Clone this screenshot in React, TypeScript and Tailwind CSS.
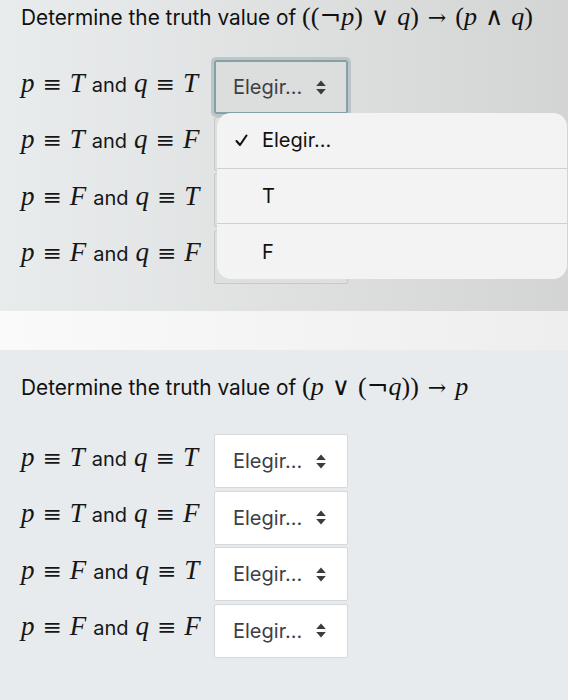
// Truth table quiz: two questions, the first with its native select menu open

const sans = "font-['Inter','Liberation_Sans',sans-serif]";
const serif = "font-['Liberation_Serif','DejaVu_Serif',serif] italic";
const op = "font-['DejaVu_Serif',serif] font-light";

type Row = { p: "T" | "F"; q: "T" | "F" };

const rows: Row[] = [
  { p: "T", q: "T" },
  { p: "T", q: "F" },
  { p: "F", q: "T" },
  { p: "F", q: "F" },
];

function SortIcon() {
  return (
    <svg width="10" height="15" viewBox="0 0 10 15" fill="#3a3d40">
      <polygon points="5 0.5 9.8 6 0.2 6" />
      <polygon points="0.2 9 9.8 9 5 14.5" />
    </svg>
  );
}

function CheckMark() {
  return (
    <svg width="13" height="13" viewBox="0 0 13 13" fill="none" stroke="#111" strokeWidth="2.1" strokeLinecap="round" strokeLinejoin="round">
      <polyline points="1.5 7 5 11 11.5 1.5" />
    </svg>
  );
}

function Label({ row }: { row: Row }) {
  return (
    <div className="w-[214px] shrink-0 pl-[21px] pb-[8px] text-[#161616] whitespace-nowrap flex items-baseline">
      <span className={`${serif} text-[27px]`}>p</span>
      <span className={`${op} text-[23px] mx-[8px]`}>≡</span>
      <span className={`${serif} text-[27px]`}>{row.p}</span>
      <span className={`${sans} text-[20px] mx-[7px]`}>and</span>
      <span className={`${serif} text-[27px]`}>q</span>
      <span className={`${op} text-[23px] mx-[8px]`}>≡</span>
      <span className={`${serif} text-[27px]`}>{row.q}</span>
    </div>
  );
}

function SelectBox({ variant }: { variant: "focus" | "dim" | "normal" }) {
  const box =
    variant === "focus"
      ? "bg-[#dcdddd] border-2 border-[#84a1a7] outline outline-[3px] outline-[#bcc6c8]"
      : variant === "dim"
      ? "bg-[#dedfdf] border border-[#c6c8c9]"
      : "bg-white border border-[#d5d9dc]";
  return (
    <div
      className={`w-[134px] h-[54px] rounded-[2px] flex items-center gap-[14px] ${
        variant === "focus" ? "pl-[17px]" : "pl-[18px]"
      } ${box}`}
    >
      {/* メニューの下に隠れている箱は文字を出さない */}
      {variant !== "dim" && (
        <>
          <span className={`${sans} text-[20px] text-[#3c4044]`}>Elegir...</span>
          <SortIcon />
        </>
      )}
    </div>
  );
}

function Question({
  title,
  variant,
}: {
  title: React.ReactNode;
  variant: "open" | "closed";
}) {
  return (
    <div className="flex flex-col">
      {title}
      <div className="flex flex-col gap-[2.5px]">
        {rows.map((row, i) => (
          <div key={i} className="flex items-center">
            <Label row={row} />
            <SelectBox
              variant={variant === "open" ? (i === 0 ? "focus" : "dim") : "normal"}
            />
          </div>
        ))}
      </div>
    </div>
  );
}

export default function App() {
  return (
    <div className="w-[568px] h-[700px] overflow-hidden bg-[#e8ebed] relative">
      {/* 1問目（メニューが開いて背景が暗くなっている） */}
      <section className="h-[311px] bg-gradient-to-r from-[#e9eced] via-[#dfe1e1] to-[#d3d4d4]">
        <Question
          variant="open"
          title={
            <h2 className="pl-[21px] -mt-[3px] h-[63px] text-[#111] whitespace-nowrap flex items-baseline">
              <span className={`${sans} text-[20.8px]`}>Determine the truth value of&nbsp;</span>
              <span className="font-['Liberation_Serif',serif] text-[26px]">
                ((<span className={op}>¬</span>
                <i>p</i>)<span className={`${op} text-[25px] mx-[8px]`}>∨</span>
                <i>q</i>)<span className={`${op} text-[22px] mx-[9px]`}>→</span>(<i>p</i>
                <span className={`${op} text-[25px] mx-[8px]`}>∧</span>
                <i>q</i>)
              </span>
            </h2>
          }
        />
      </section>

      {/* 区切りの帯 */}
      <div className="h-[39px] bg-gradient-to-r from-[#fafafa] to-[#eeeeee]" />

      {/* 2問目 */}
      <section className="pt-[17px]">
        <Question
          variant="closed"
          title={
            <h2 className="pl-[21px] h-[67px] text-[#111] whitespace-nowrap flex items-baseline">
              <span className={`${sans} text-[20.8px]`}>Determine the truth value of&nbsp;</span>
              <span className="font-['Liberation_Serif',serif] text-[26px]">
                (<i>p</i>
                <span className={`${op} text-[25px] mx-[8px]`}>∨</span>(
                <span className={op}>¬</span>
                <i>q</i>))<span className={`${op} text-[22px] mx-[9px]`}>→</span>
                <i>p</i>
              </span>
            </h2>
          }
        />
      </section>

      {/* 開いているセレクトメニュー */}
      <div className="absolute left-[217px] top-[113px] w-[350px] h-[166px] rounded-[14px] bg-[#f3f3f3] flex flex-col overflow-hidden">
        {[
          { label: "Elegir...", checked: true },
          { label: "T", checked: false },
          { label: "F", checked: false },
        ].map((item, i) => (
          <div
            key={i}
            className={`flex-1 flex items-center ${i > 0 ? "border-t border-[#cfcfcf]" : ""}`}
          >
            <span className="w-[45px] pl-[18px] flex items-center">
              {item.checked && <CheckMark />}
            </span>
            <span className={`${sans} text-[20px] text-[#111]`}>{item.label}</span>
          </div>
        ))}
      </div>
    </div>
  );
}
